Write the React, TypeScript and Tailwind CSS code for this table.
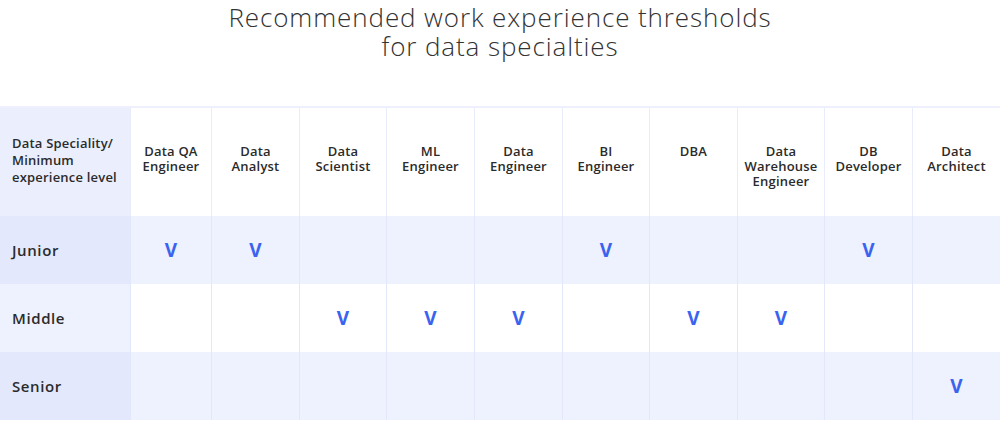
const COLUMNS = [
  "Data QA Engineer",
  "Data Analyst",
  "Data Scientist",
  "ML Engineer",
  "Data Engineer",
  "BI Engineer",
  "DBA",
  "Data Warehouse Engineer",
  "DB Developer",
  "Data Architect",
];

const HEADER_LINES: string[][] = [
  ["Data QA", "Engineer"],
  ["Data", "Analyst"],
  ["Data", "Scientist"],
  ["ML", "Engineer"],
  ["Data", "Engineer"],
  ["BI", "Engineer"],
  ["DBA"],
  ["Data", "Warehouse", "Engineer"],
  ["DB", "Developer"],
  ["Data", "Architect"],
];

type Row = { level: string; checks: number[]; shaded: boolean };

const ROWS: Row[] = [
  { level: "Junior", checks: [0, 1, 5, 8], shaded: true },
  { level: "Middle", checks: [2, 3, 4, 6, 7], shaded: false },
  { level: "Senior", checks: [9], shaded: true },
];

export default function App() {
  return (
    <div
      className="w-[1000px] h-[421px] bg-white overflow-hidden text-[#2b2b2b]"
      style={{ fontFamily: '"Open Sans", "Noto Sans", sans-serif' }}
    >
      <h1 className="pt-[3px] text-center text-[26px] font-light leading-[29px] tracking-[0.9px] text-[#333]">
        <div>Recommended work experience thresholds</div>
        <div>for data specialties</div>
      </h1>

      <div className="mt-[45px] border-t-[2px] border-[#eef1fd] grid grid-cols-[130px_81px_88px_87px_88px_88px_87px_88px_87px_88px_88px]">
        {/* header */}
        <div className="h-[108px] bg-[#eaeefd] pl-[12px] pt-[27px] text-[13px] font-semibold leading-[17px] tracking-[0.2px]">
          <div>Data Speciality/</div>
          <div>Minimum</div>
          <div>experience level</div>
        </div>
        {COLUMNS.map((c, i) => (
          <div
            key={c}
            className="h-[108px] border-l border-[#e9ecfb] pt-[36px] text-center text-[13px] font-semibold leading-[15px] tracking-[0.2px]"
          >
            {HEADER_LINES[i].map((l) => (
              <div key={l}>{l}</div>
            ))}
          </div>
        ))}

        {/* rows */}
        {ROWS.map((row) => (
          <>
            <div
              key={row.level}
              className={`h-[68px] flex items-center pl-[12px] text-[15px] font-semibold tracking-[0.6px] ${
                row.shaded ? "bg-[#e3e8fc]" : "bg-[#eef1fe]"
              }`}
            >
              {row.level}
            </div>
            {COLUMNS.map((c, i) => (
              <div
                key={row.level + c}
                className={`h-[68px] border-l border-[#e3e7fa] flex items-center justify-center text-[19px] font-bold text-[#3a63ef] ${
                  row.shaded ? "bg-[#eef1fe]" : "bg-white"
                }`}
              >
                {row.checks.includes(i) ? "V" : ""}
              </div>
            ))}
          </>
        ))}
      </div>
    </div>
  );
}
